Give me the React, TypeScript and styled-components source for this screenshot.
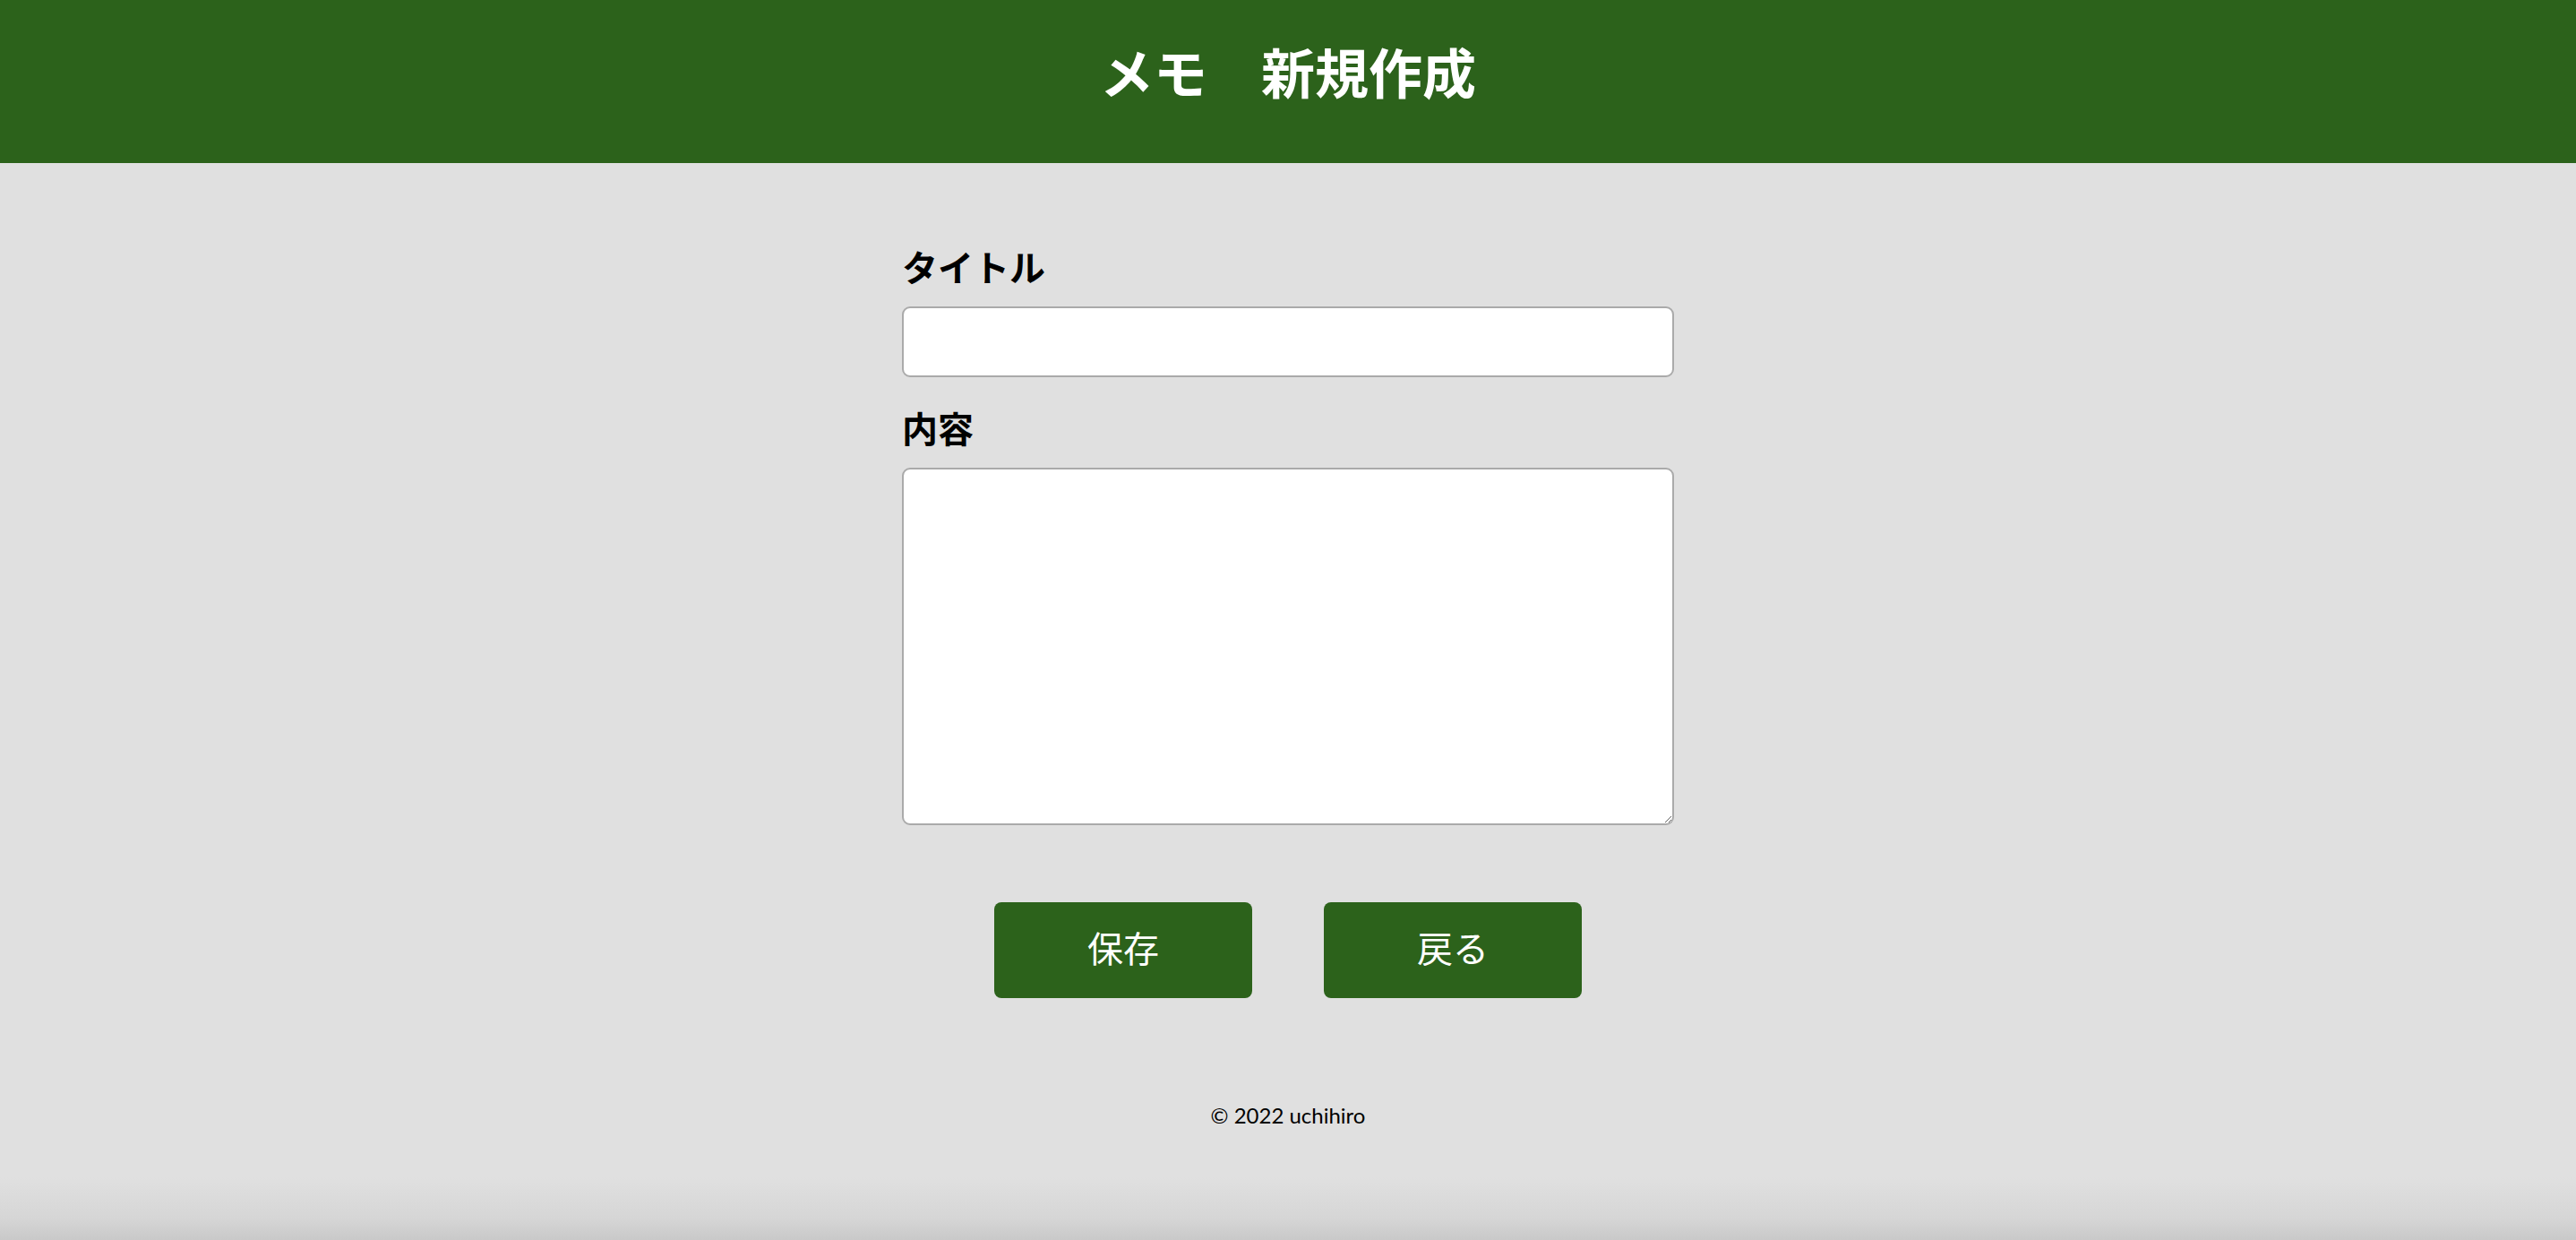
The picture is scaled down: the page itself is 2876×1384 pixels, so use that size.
import React from "react";
import styled, { createGlobalStyle } from "styled-components";

const GlobalStyle = createGlobalStyle`
  html,
  body {
    margin: 0;
    padding: 0;
  }
  body {
    min-height: 100vh;
    background: linear-gradient(
      to bottom,
      #e0e0e0 calc(100% - 70px),
      #d6d6d6 calc(100% - 25px),
      #c9c9c9 100%
    );
    font-family: "Noto Sans CJK JP", "Noto Sans", sans-serif;
    color: #000;
  }
`;

const Header = styled.header`
  box-sizing: border-box;
  height: 182px;
  padding-bottom: 24px;
  background-color: #2c621b;
  display: flex;
  align-items: center;
  justify-content: center;
  h1 {
    margin: 0;
    font-size: 60px;
    font-weight: bold;
    color: #fff;
    line-height: 1;
  }
`;

const Main = styled.main`
  padding-top: 85px;
`;

const Form = styled.form`
  width: 862px;
  margin: 0 auto;
  display: flex;
  flex-direction: column;
`;

const Label = styled.label`
  font-size: 40px;
  font-weight: bold;
  line-height: 60px;
  margin-top: ${(p: { $first?: boolean }) => (p.$first ? "0" : "26px")};
  margin-bottom: 15px;
`;

const TextInput = styled.input`
  box-sizing: border-box;
  height: 79px;
  border: 2px solid #aaa;
  border-radius: 9px;
  background: #fff;
  font-size: 32px;
  padding: 0 14px;
  outline: none;
`;

const TextArea = styled.textarea`
  box-sizing: border-box;
  height: 399px;
  border: 2px solid #aaa;
  border-radius: 9px;
  background: #fff;
  font-size: 32px;
  padding: 10px 14px;
  outline: none;
  font-family: inherit;
`;

const ButtonRow = styled.div`
  display: flex;
  justify-content: center;
  gap: 80px;
  margin-top: 86px;
`;

const Button = styled.button`
  width: 288px;
  height: 107px;
  padding: 0 0 8px;
  border: none;
  border-radius: 8px;
  background-color: #2c621b;
  color: #fff;
  font-family: "Noto Sans CJK JP", sans-serif;
  font-size: 40px;
  cursor: pointer;
`;

const Footer = styled.footer`
  margin-top: 111px;
  text-align: center;
  font-family: Lato, "Noto Sans", sans-serif;
  font-size: 24px;
  line-height: 39px;
`;

function App() {
  return (
    <>
      <GlobalStyle />
      <Header>
        <h1>メモ　新規作成</h1>
      </Header>
      <Main>
        <Form onSubmit={(e) => e.preventDefault()}>
          <Label $first htmlFor="title">
            タイトル
          </Label>
          <TextInput id="title" type="text" />
          <Label htmlFor="content">内容</Label>
          <TextArea id="content" />
        </Form>
        <ButtonRow>
          <Button type="button">保存</Button>
          <Button type="button">戻る</Button>
        </ButtonRow>
        <Footer>© 2022 uchihiro</Footer>
      </Main>
    </>
  );
}

export default App;
